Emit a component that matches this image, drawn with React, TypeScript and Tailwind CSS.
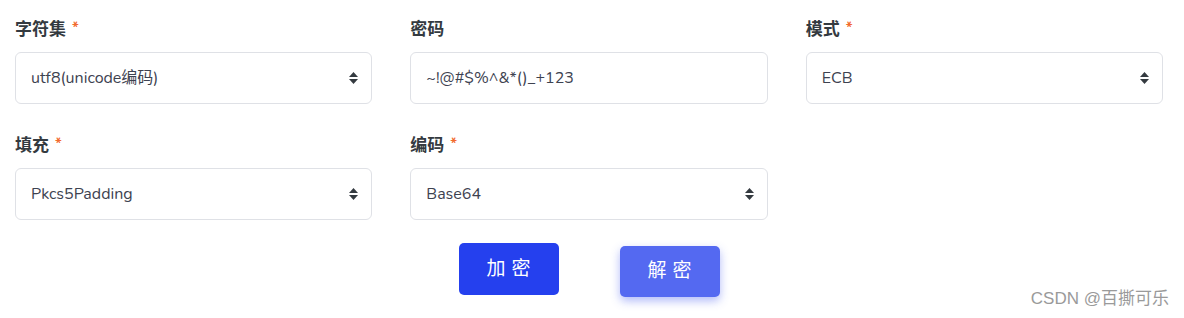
import React from 'react';

const Arrows: React.FC = () => (
  <svg width="11" height="16" viewBox="0 0 11 16" className="text-[#343a40]">
    <path d="M5.5 2 L10 7 H1 Z" fill="currentColor" />
    <path d="M5.5 14 L10 9 H1 Z" fill="currentColor" />
  </svg>
);

type FieldProps = { label: string; required?: boolean; value: string; select?: boolean };

const Field: React.FC<FieldProps> = ({ label, required, value, select }) => (
  <div>
    <div className="h-[24px] mb-[10px] flex items-center gap-[6px] text-[17px] font-bold text-[#343a40] leading-[24px]">
      <span>{label}</span>
      {required && <span className="text-[#f26a2e] text-[15px] font-bold -mt-[4px]">*</span>}
    </div>
    <div className="h-[52px] rounded-[6px] border border-[#dfe1e6] bg-white flex items-center justify-between pl-[15px] pr-[12px] text-[16px] text-[#3d4250]">
      <span>{value}</span>
      {select && <Arrows />}
    </div>
  </div>
);

export default function App() {
  return (
    <div
      className="relative w-[1184px] h-[318px] bg-white overflow-hidden"
      style={{ fontFamily: '"Nunito", "Open Sans", "Noto Sans CJK SC", sans-serif' }}
    >
      <div className="pt-[18px] pl-[15px] pr-[21px]">
        <div className="grid grid-cols-3 gap-x-[38px] gap-y-[30px]">
          <Field label="字符集" required value="utf8(unicode编码)" select />
          <Field label="密码" value="~!@#$%^&*()_+123" />
          <Field label="模式" required value="ECB" select />
          <Field label="填充" required value="Pkcs5Padding" select />
          <Field label="编码" required value="Base64" select />
        </div>
        <div className="flex justify-center items-start gap-[61px] mt-[23px]">
          <button className="w-[100px] h-[52px] rounded-[5px] bg-[#2540ee] text-white text-[19px] tracking-[6px] pl-[6px]">
            加密
          </button>
          <button className="mt-[3px] w-[100px] h-[51px] rounded-[5px] bg-[#5469f1] text-white text-[19px] tracking-[6px] pl-[6px] shadow-[0_4px_10px_rgba(84,105,241,0.45)]">
            解密
          </button>
        </div>
      </div>
      <div className="absolute right-[15px] bottom-[7px] text-[17px] text-[#9a9a9a]" style={{ fontFamily: '"Liberation Sans", "Noto Sans CJK SC", sans-serif' }}>
        CSDN @百撕可乐
      </div>
    </div>
  );
}
